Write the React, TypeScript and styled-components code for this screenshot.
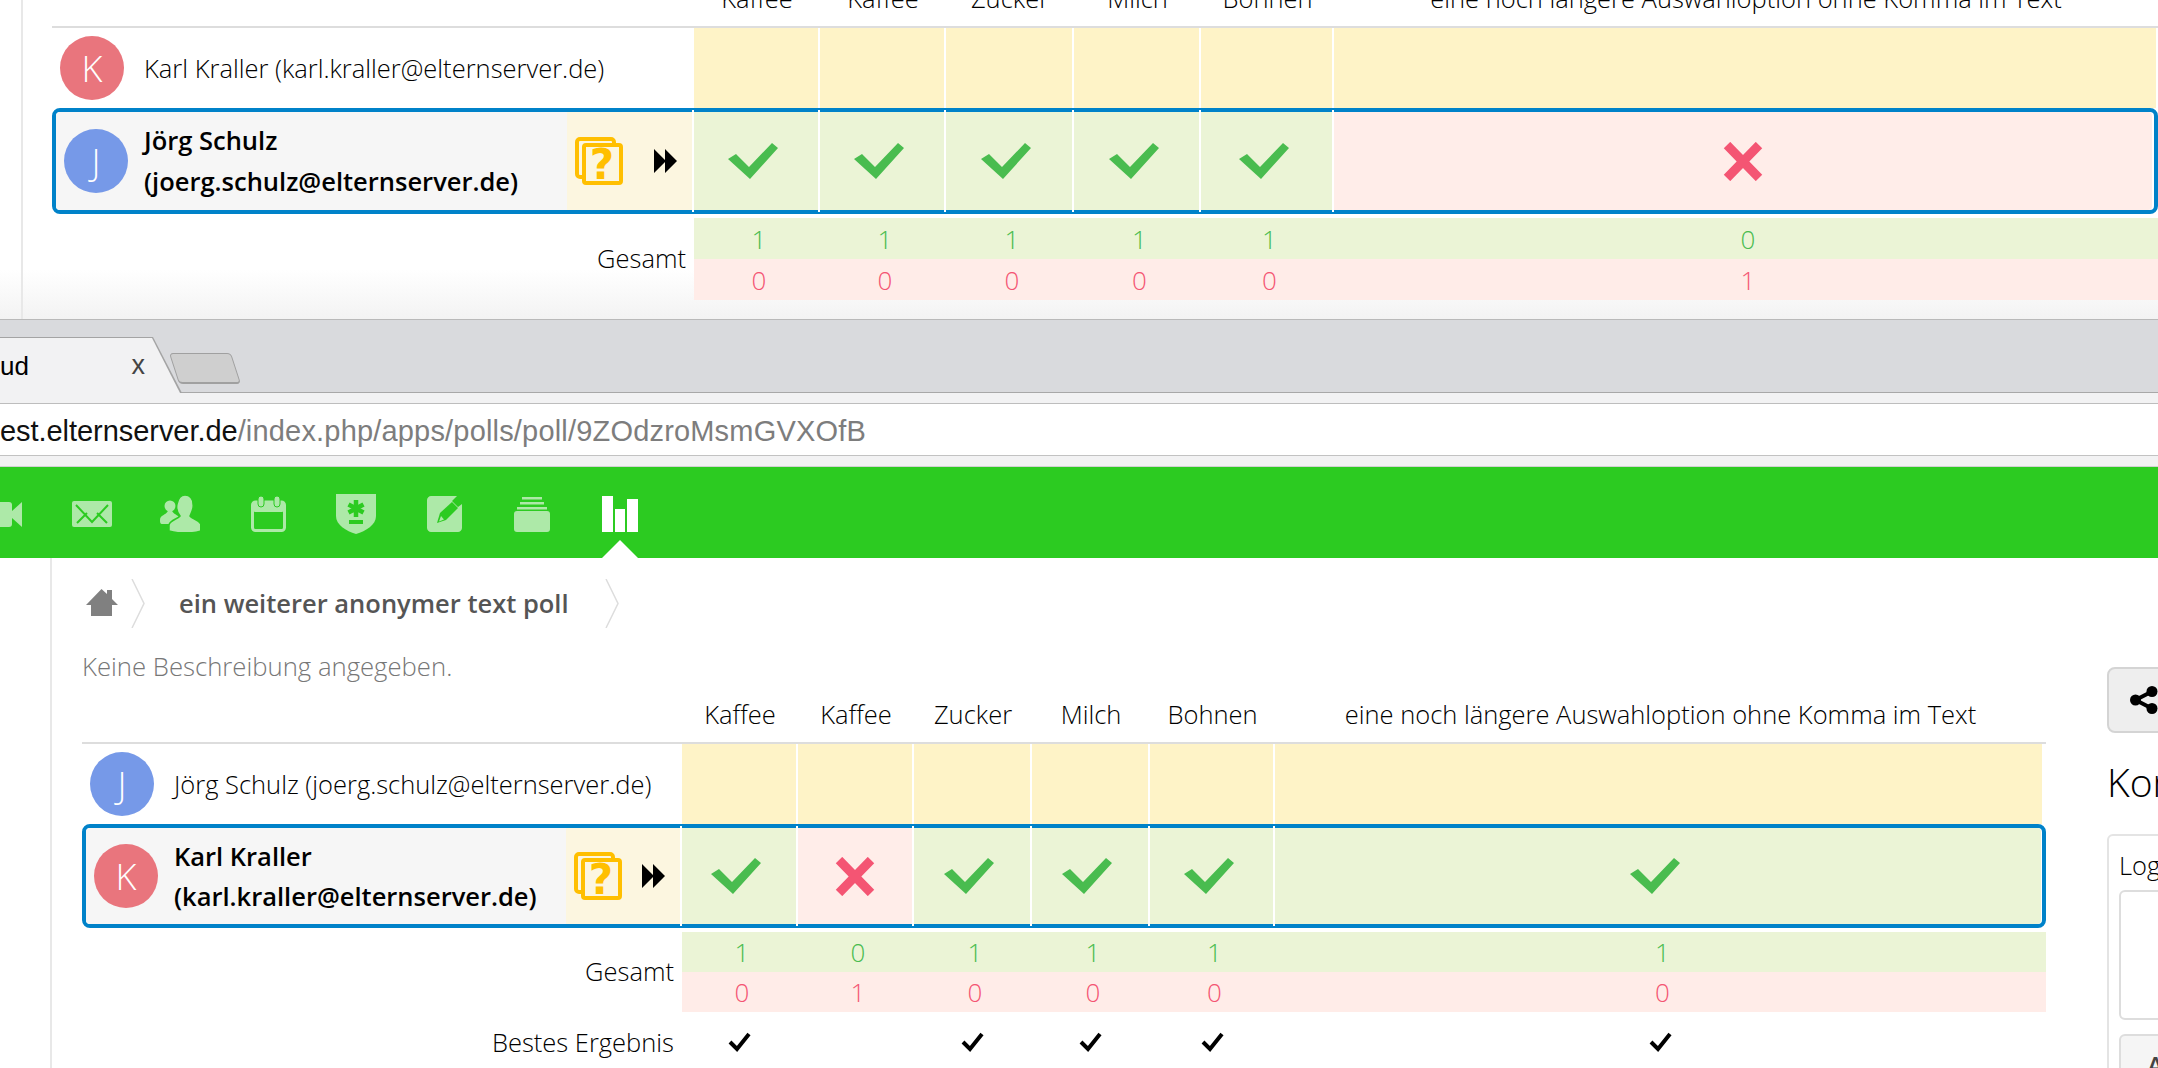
import React from 'react';
import styled, { createGlobalStyle } from 'styled-components';

const Global = createGlobalStyle`
  html, body { margin: 0; padding: 0; background: #fff; overflow: hidden; }
  body { font-family: "Open Sans", "Liberation Sans", sans-serif; color: #000; }
  #root { width: 2158px; height: 1068px; overflow: hidden; }
`;

const Page = styled.div`
  width: 2158px;
  height: 1068px;
  display: flex;
  flex-direction: column;
  overflow: hidden;
`;

const TopPanel = styled.section`
  height: 319px;
  flex: none;
  display: flex;
  overflow: hidden;
  border-bottom: 1px solid #b9b9b9;
  background: linear-gradient(#fff 270px, #f3f3f3 318px);
  box-sizing: content-box;
`;
const Rail = styled.div<{ $w: number; $lineLeft: number }>`
  flex: none;
  width: ${p => p.$w}px;
  position: relative;
  &::before {
    content: '';
    position: absolute;
    top: 0;
    bottom: 0;
    left: ${p => p.$lineLeft}px;
    width: 2px;
    background: #e8e8e8;
  }
`;

const Table = styled.div<{ $width: number }>`
  flex: none;
  width: ${p => p.$width}px;
  font-size: 25.5px;
  font-weight: 300;
`;

const Grid = styled.div<{ $cols: number[] }>`
  display: grid;
  grid-template-columns: ${p => p.$cols.map(c => c + 'px').join(' ')};
`;

const HeaderRow = styled(Grid)<{ $clip?: boolean }>`
  height: 54px;
  margin-top: ${p => (p.$clip ? '-28px' : '0')};
  box-sizing: content-box;
  border-bottom: 2px solid #ddd;
`;
const HeaderCell = styled.div`
  display: flex;
  align-items: center;
  justify-content: center;
  white-space: nowrap;
  padding-bottom: 2px;
`;

const Row = styled(Grid)<{ $inset: number }>`
  height: 80px;
  & > :last-child { margin-right: ${p => p.$inset}px; }
`;
const NameCell = styled.div`
  display: flex;
  align-items: center;
  gap: 20px;
  padding-left: 8px;
  white-space: nowrap;
`;
const Avatar = styled.div<{ $bg: string }>`
  width: 64px;
  height: 64px;
  flex: none;
  border-radius: 50%;
  background: ${p => p.$bg};
  color: #fff;
  font-size: 36px;
  font-weight: 300;
  display: flex;
  align-items: center;
  justify-content: center;
`;
const VoteCell = styled.div<{ $kind: 'open' | 'yes' | 'no' }>`
  background: ${p => (p.$kind === 'open' ? '#fef3c7' : p.$kind === 'yes' ? '#ebf4d6' : '#ffede9')};
  border-right: 2px solid #fff;
  display: flex;
  align-items: center;
  justify-content: center;
  &:last-child { border-right: 0; }
`;
const SelectedVote = styled(VoteCell)`
  position: relative;
  &:not(:last-child)::after {
    content: '';
    position: absolute;
    top: -2px;
    bottom: -2px;
    right: -2px;
    width: 2px;
    background: #fff;
  }
  &:last-child { border-radius: 0 4px 4px 0; }
`;

const SelectedRow = styled(Grid)<{ $h: number }>`
  height: ${p => p.$h}px;
  box-sizing: border-box;
  border: 4px solid #0082c9;
  border-radius: 8px;
`;
const SelectedName = styled.div`
  display: flex;
  align-items: center;
  background: #f6f6f6;
  border-radius: 4px 0 0 4px;
  padding-left: 8px;
  gap: 16px;
`;
const NameLines = styled.div<{ $line: number }>`
  font-weight: 600;
  line-height: ${p => p.$line}px;
  white-space: nowrap;
`;
const SelectedTools = styled.div<{ $gap: number }>`
  display: flex;
  align-items: center;
  background: #fcf6e0;
  border-right: 2px solid #fff;
  padding-left: 8px;
  gap: ${p => p.$gap}px;
  position: relative;
  &::after {
    content: '';
    position: absolute;
    top: -2px;
    bottom: -2px;
    right: -2px;
    width: 2px;
    background: #fff;
  }
`;

const StatsRow = styled(Grid)`
  margin-top: 4px;
`;
const BestLabel = styled.div`
  display: flex;
  align-items: center;
  justify-content: flex-end;
  padding-right: 8px;
`;
const StatLabel = styled(BestLabel)`
  padding-bottom: 3px;
`;
const StatColumn = styled.div`
  display: flex;
  flex-direction: column;
`;
const Stat = styled.div<{ $yes?: boolean; $h: number }>`
  height: ${p => p.$h}px;
  display: flex;
  align-items: center;
  justify-content: center;
  font-size: 26px;
  background: ${p => (p.$yes ? '#ebf4d6' : '#ffece8')};
  color: ${p => (p.$yes ? '#49bc4f' : '#f45573')};
  padding-left: 4px;
`;
const BestRow = styled(Grid)`
  height: 60px;
`;
const BestCell = styled.div`
  display: flex;
  align-items: center;
  justify-content: center;
`;

const Chrome = styled.div`
  flex: none;
  height: 147px;
  display: flex;
  flex-direction: column;
  font-family: "Liberation Sans", Arial, sans-serif;
`;
const TabStrip = styled.div`
  height: 73px;
  box-sizing: border-box;
  background: #d9dadd;
  border-bottom: 1px solid #a8a8a8;
  display: flex;
  align-items: flex-end;
`;
const Tab = styled.div`
  width: 182px;
  height: 56px;
  flex: none;
  margin-bottom: -1px;
  background: #a4a4a4;
  clip-path: polygon(0 0, 153px 0, 182px 100%, 0 100%);
`;
const TabFace = styled.div`
  height: 100%;
  box-sizing: border-box;
  background: #f2f2f3;
  display: flex;
  align-items: center;
  justify-content: space-between;
  padding: 3px 37px 0 0;
  font-size: 26px;
  color: #000;
  clip-path: polygon(0 1px, 152px 1px, 180px 100%, 0 100%);
`;
const TabClose = styled.span`
  font-size: 27px;
  color: #444;
  margin-top: -2px;
`;
const NewTab = styled.div`
  width: 62px;
  height: 31px;
  margin: 0 0 8px -8px;
  flex: none;
  background: #cfcfcf;
  border: 1px solid #a0a0a0;
  border-bottom-width: 2px;
  border-radius: 4px;
  transform: skewX(18deg);
  box-sizing: border-box;
`;
const ToolGap = styled.div`
  height: 10px;
  background: #f2f2f3;
  border-bottom: 1px solid #bdbdbd;
`;
const UrlBar = styled.div`
  height: 52px;
  box-sizing: border-box;
  background: #fff;
  border-bottom: 1px solid #c2c2c2;
  padding-top: 4px;
  display: flex;
  align-items: center;
  white-space: nowrap;
  font-size: 29px;
  color: #7d7d7d;
  letter-spacing: 0.18px;
`;
const UrlHost = styled.span`
  color: #111;
  letter-spacing: -0.05px;
`;
const ChromeEnd = styled.div`
  height: 11px;
  box-sizing: border-box;
  background: #f2f2f3;
  border-bottom: 1px solid #d2d2d2;
`;

const Nav = styled.nav`
  flex: none;
  height: 91px;
  background: #2ccb21;
  display: flex;
  margin-left: -40px;
`;
const NavItem = styled.div<{ $active?: boolean; $top: number }>`
  width: 88px;
  flex: none;
  position: relative;
  display: flex;
  justify-content: center;
  align-items: flex-start;
  padding-top: ${p => p.$top}px;
  box-sizing: border-box;
  color: ${p => (p.$active ? '#fff' : '#ade9a8')};
  ${p => p.$active && `
    &::after {
      content: '';
      position: absolute;
      bottom: 0;
      left: 26px;
      border: 18px solid transparent;
      border-top: 0;
      border-bottom-color: #fff;
    }
  `}
`;

const Content = styled.section`
  flex: 1;
  display: flex;
  min-height: 0;
`;
const Main = styled.div`
  flex: none;
  width: 2000px;
  padding-left: 31px;
  box-sizing: border-box;
  display: flex;
  flex-direction: column;
`;
const Breadcrumbs = styled.div`
  flex: none;
  height: 90px;
  display: flex;
  align-items: center;
  margin-left: 4px;
  font-size: 25.5px;
  font-weight: 600;
  color: #555;
`;
const Crumb = styled.span`
  margin: 0 36px 0 34px;
  white-space: nowrap;
`;
const HomeIcon = styled.svg`
  margin: -2px 13px 0 0;
`;
const Description = styled.div`
  flex: none;
  font-size: 25.7px;
  font-weight: 300;
  color: #777;
  height: 36px;
  margin-bottom: 4px;
  display: flex;
  align-items: center;
`;

const Side = styled.aside`
  flex: none;
  width: 163px;
  margin-left: 56px;
  padding-top: 109px;
  font-weight: 300;
  white-space: nowrap;
`;
const ShareButton = styled.button`
  display: flex;
  align-items: center;
  width: 120px;
  height: 66px;
  padding: 0 0 0 21px;
  background: #eee;
  border: 2px solid #d4d4d4;
  border-radius: 8px;
  color: #000;
`;
const CommentsTitle = styled.h2`
  margin: 22px 0 0;
  font-size: 39px;
  font-weight: 300;
  line-height: 54px;
`;
const CommentBox = styled.div`
  margin-top: 25px;
  width: 140px;
  height: 300px;
  box-sizing: border-box;
  border: 2px solid #e4e4e4;
  border-radius: 6px;
  padding: 12px 0 0 10px;
  font-size: 25.5px;
`;
const CommentArea = styled.div`
  margin-top: 8px;
  width: 120px;
  height: 130px;
  box-sizing: border-box;
  border: 2px solid #ddd;
  border-radius: 6px;
`;
const SendButton = styled.div`
  margin-top: 14px;
  width: 120px;
  height: 50px;
  box-sizing: border-box;
  border: 2px solid #ddd;
  border-radius: 6px;
  background: #f5f5f5;
  padding: 12px 0 0 26px;
  font-weight: 600;
  color: #444;
`;

const Check = () => (
  <svg width="56" height="36" viewBox="0 0 56 36"><polygon fill="#49bc4f" points="0,16 8,11 21,24 44,0 50,5 22,36" /></svg>
);
const SmallCheck = () => (
  <svg width="24" height="20" viewBox="0 0 24 20"><path d="M2 10 L9 17 L21 2" fill="none" stroke="#000" strokeWidth="4" /></svg>
);
const Cross = () => (
  <svg width="40" height="39" viewBox="0 0 40 39"><path d="M4 3 L36 36 M36 3 L4 36" fill="none" stroke="#f45573" strokeWidth="9" /></svg>
);
const QuestionIcon = () => (
  <svg width="48" height="48" viewBox="0 0 48 48">
    <rect x="2" y="2" width="37" height="38" rx="3" fill="none" stroke="#ffbf00" strokeWidth="4" />
    <rect x="9" y="8" width="37" height="38" rx="2" fill="#fcf6e0" stroke="#ffbf00" strokeWidth="4" />
    <text x="27" y="42" textAnchor="middle" fontFamily="DejaVu Sans" fontWeight="700" fontSize="42" fill="#ffbf00">?</text>
  </svg>
);
const Arrows = () => (
  <svg width="24" height="24" viewBox="0 0 24 24"><path d="M0 0 L12 12 L0 24Z M11 0 L23 12 L11 24Z" fill="#000" /></svg>
);

type Vote = 'open' | 'yes' | 'no';
const opts = ['Kaffee', 'Kaffee', 'Zucker', 'Milch', 'Bohnen', 'eine noch längere Auswahloption ohne Komma im Text'];

interface PollProps {
  label: number;
  cols: number[];
  tools: number;
  toolGap: number;
  rowH: number;
  statH: number;
  line: number;
  extra: number;
  inset: number;
  otherName: string;
  otherBg: string;
  otherInitial: string;
  meFirst: string;
  meSecond: string;
  meBg: string;
  meInitial: string;
  votes: Vote[];
  yes: number[];
  no: number[];
  best?: boolean[];
  clip?: boolean;
}

const Poll = ({ label, cols, tools, toolGap, rowH, statH, line, extra, inset, otherName, otherBg, otherInitial, meFirst, meSecond, meBg, meInitial, votes, yes, no, best, clip }: PollProps) => {
  const full = [label, ...cols];
  const wide = [label, ...cols.slice(0, -1), cols[cols.length - 1] + extra];
  const inner = [label - 4 - tools, tools, ...cols.slice(0, -1), cols[cols.length - 1] - 4];
  const width = wide.reduce((a, b) => a + b, 0);
  return (
    <Table $width={width}>
      <HeaderRow $cols={wide} $clip={clip}>
        <div />
        {opts.map((o, i) => <HeaderCell key={i}>{o}</HeaderCell>)}
      </HeaderRow>
      <Row $cols={full} $inset={inset}>
        <NameCell>
          <Avatar $bg={otherBg}>{otherInitial}</Avatar>
          <span>{otherName}</span>
        </NameCell>
        {opts.map((_, i) => <VoteCell key={i} $kind="open" />)}
      </Row>
      <SelectedRow $cols={inner} $h={rowH}>
        <SelectedName>
          <Avatar $bg={meBg}>{meInitial}</Avatar>
          <NameLines $line={line}>{meFirst}<br />{meSecond}</NameLines>
        </SelectedName>
        <SelectedTools $gap={toolGap}><QuestionIcon /><Arrows /></SelectedTools>
        {votes.map((v, i) => <SelectedVote key={i} $kind={v}>{v === 'yes' ? <Check /> : <Cross />}</SelectedVote>)}
      </SelectedRow>
      <StatsRow $cols={wide}>
        <StatLabel>Gesamt</StatLabel>
        {yes.map((y, i) => (
          <StatColumn key={i}>
            <Stat $yes $h={statH}>{y}</Stat>
            <Stat $h={statH}>{no[i]}</Stat>
          </StatColumn>
        ))}
      </StatsRow>
      {best && (
        <BestRow $cols={wide}>
          <BestLabel>Bestes Ergebnis</BestLabel>
          {best.map((b, i) => <BestCell key={i}>{b && <SmallCheck />}</BestCell>)}
        </BestRow>
      )}
    </Table>
  );
};

const Video = () => (
  <svg width="40" height="26" viewBox="0 0 40 26" fill="currentColor"><rect x="0" y="0" width="28" height="25" rx="3" /><path d="M28 9 L38 0 V25 L28 16Z" /></svg>
);
const Mail = () => (
  <svg width="40" height="26" viewBox="0 0 40 26"><rect width="40" height="26" rx="2" fill="currentColor" /><path d="M4 4 L20 21 L36 4 M5 22 L15 12 M35 22 L25 12" fill="none" stroke="#2ccb21" strokeWidth="2" /></svg>
);
const People = () => (
  <svg width="40" height="37" viewBox="0 0 40 37" fill="currentColor">
    <circle cx="10" cy="11" r="5.5" />
    <path d="M0 25 C0 20 6 20 8 16 H12 C14 20 20 20 20 25 V29 H2 C0 29 0 27 0 25Z" />
    <path d="M9 36 L9 30 C10 25 18 24 20 21 C17 17 16 13 17 9 C18 4 21 0 25 0 C30 0 33 4 33 9 C34 13 32 17 30 21 C32 24 40 25 41 30 V36 C30 39 20 39 9 36Z" stroke="#2ccb21" strokeWidth="1.5" />
  </svg>
);
const Calendar = () => (
  <svg width="35" height="36" viewBox="0 0 35 36">
    <rect x="1.5" y="6" width="32" height="28.5" rx="3" fill="none" stroke="currentColor" strokeWidth="3" />
    <rect x="1.5" y="6" width="32" height="10" rx="3" fill="currentColor" />
    <rect x="7" y="0" width="6" height="11" rx="3" fill="currentColor" stroke="#2ccb21" strokeWidth="1" />
    <rect x="23" y="0" width="6" height="11" rx="3" fill="currentColor" stroke="#2ccb21" strokeWidth="1" />
  </svg>
);
const Shield = () => (
  <svg width="40" height="40" viewBox="0 0 40 40">
    <path d="M0 0 H40 V22 C40 31 30 37 20 40 C10 37 0 31 0 22Z" fill="currentColor" />
    <path d="M20 6 V23 M12.5 10.5 L27.5 18.5 M27.5 10.5 L12.5 18.5" stroke="#2ccb21" strokeWidth="4.5" fill="none" />
    <rect x="13" y="26" width="14" height="4" fill="#2ccb21" />
  </svg>
);
const Note = () => (
  <svg width="35" height="36" viewBox="0 0 35 36">
    <path d="M4 0 H30 L25 5 L31 11 L35 8 V32 C35 34 33 36 31 36 H4 C2 36 0 34 0 32 V4 C0 2 2 0 4 0Z" fill="currentColor" />
    <path d="M10 27 L13 17 L25 6 L31 12 L19 24Z" fill="#2ccb21" />
    <path d="M12 25.5 L14 20 L17 23.5Z" fill="currentColor" />
  </svg>
);
const Stack = () => (
  <svg width="36" height="36" viewBox="0 0 36 36" fill="currentColor">
    <rect x="8" y="1" width="20" height="2.5" /><rect x="6" y="6" width="24" height="2.5" /><rect x="3" y="11" width="30" height="2.5" />
    <rect x="0" y="15" width="36" height="21" rx="3" />
  </svg>
);
const Bars = () => (
  <svg width="36" height="36" viewBox="0 0 36 36" fill="currentColor">
    <rect x="0" y="0" width="11" height="36" /><rect x="13" y="13" width="10" height="23" /><rect x="25" y="3" width="11" height="33" />
  </svg>
);

const Chevron = () => (
  <svg width="14" height="49" viewBox="0 0 14 49"><path d="M1 0 L13 24.5 L1 49" fill="none" stroke="#ddd" strokeWidth="1.5" /></svg>
);
const Home = () => (
  <HomeIcon width="32" height="27" viewBox="0 0 32 27"><path d="M15.5 0 L21 5 V1 H26 V10 L32 16 H26 V27 H5 V16 H0Z" fill="#808080" /></HomeIcon>
);
const ShareIcon = () => (
  <svg width="30" height="28" viewBox="0 0 30 28" fill="#000">
    <circle cx="5.5" cy="14" r="5.5" /><circle cx="22" cy="5.5" r="5.5" /><circle cx="22" cy="22.5" r="5.5" />
    <path d="M5.5 14 L22 5.5 M5.5 14 L22 22.5" stroke="#000" strokeWidth="4" />
  </svg>
);

export default function App() {
  return (
    <Page>
      <Global />
      <TopPanel>
        <Rail $w={52} $lineLeft={21} />
        <Poll
          label={642}
          cols={[126, 126, 128, 127, 133, 822]}
          tools={127}
          toolGap={31}
          rowH={106}
          statH={41}
          line={41}
          extra={2}
          inset={0}
          otherName="Karl Kraller (karl.kraller@elternserver.de)"
          otherBg="#e9757d"
          otherInitial="K"
          meFirst="Jörg Schulz"
          meSecond="(joerg.schulz@elternserver.de)"
          meBg="#7699e8"
          meInitial="J"
          votes={['yes', 'yes', 'yes', 'yes', 'yes', 'no']}
          yes={[1, 1, 1, 1, 1, 0]}
          no={[0, 0, 0, 0, 0, 1]}
          clip
        />
      </TopPanel>
      <Chrome>
        <TabStrip>
          <Tab><TabFace><span>ud</span><TabClose>x</TabClose></TabFace></Tab>
          <NewTab />
        </TabStrip>
        <ToolGap />
        <UrlBar><UrlHost>est.elternserver.de</UrlHost>/index.php/apps/polls/poll/9ZOdzroMsmGVXOfB</UrlBar>
        <ChromeEnd />
      </Chrome>
      <Nav>
        <NavItem $top={35}><Video /></NavItem>
        <NavItem $top={34}><Mail /></NavItem>
        <NavItem $top={28}><People /></NavItem>
        <NavItem $top={29}><Calendar /></NavItem>
        <NavItem $top={27}><Shield /></NavItem>
        <NavItem $top={29}><Note /></NavItem>
        <NavItem $top={29}><Stack /></NavItem>
        <NavItem $active $top={29}><Bars /></NavItem>
      </Nav>
      <Content>
        <Rail $w={51} $lineLeft={50} />
        <Main>
          <Breadcrumbs>
            <Home />
            <Chevron />
            <Crumb>ein weiterer anonymer text poll</Crumb>
            <Chevron />
          </Breadcrumbs>
          <Description>Keine Beschreibung angegeben.</Description>
          <Poll
            label={600}
            cols={[116, 116, 118, 118, 125, 770]}
            tools={116}
            toolGap={20}
            rowH={104}
            statH={40}
            line={40}
            extra={1}
            inset={3}
            otherName="Jörg Schulz (joerg.schulz@elternserver.de)"
            otherBg="#7699e8"
            otherInitial="J"
            meFirst="Karl Kraller"
            meSecond="(karl.kraller@elternserver.de)"
            meBg="#e9757d"
            meInitial="K"
            votes={['yes', 'no', 'yes', 'yes', 'yes', 'yes']}
            yes={[1, 0, 1, 1, 1, 1]}
            no={[0, 1, 0, 0, 0, 0]}
            best={[true, false, true, true, true, true]}
          />
        </Main>
        <Side>
          <ShareButton><ShareIcon /></ShareButton>
          <CommentsTitle>Kommentare</CommentsTitle>
          <CommentBox>
            Login
            <CommentArea />
            <SendButton>Absenden</SendButton>
          </CommentBox>
        </Side>
      </Content>
    </Page>
  );
}
